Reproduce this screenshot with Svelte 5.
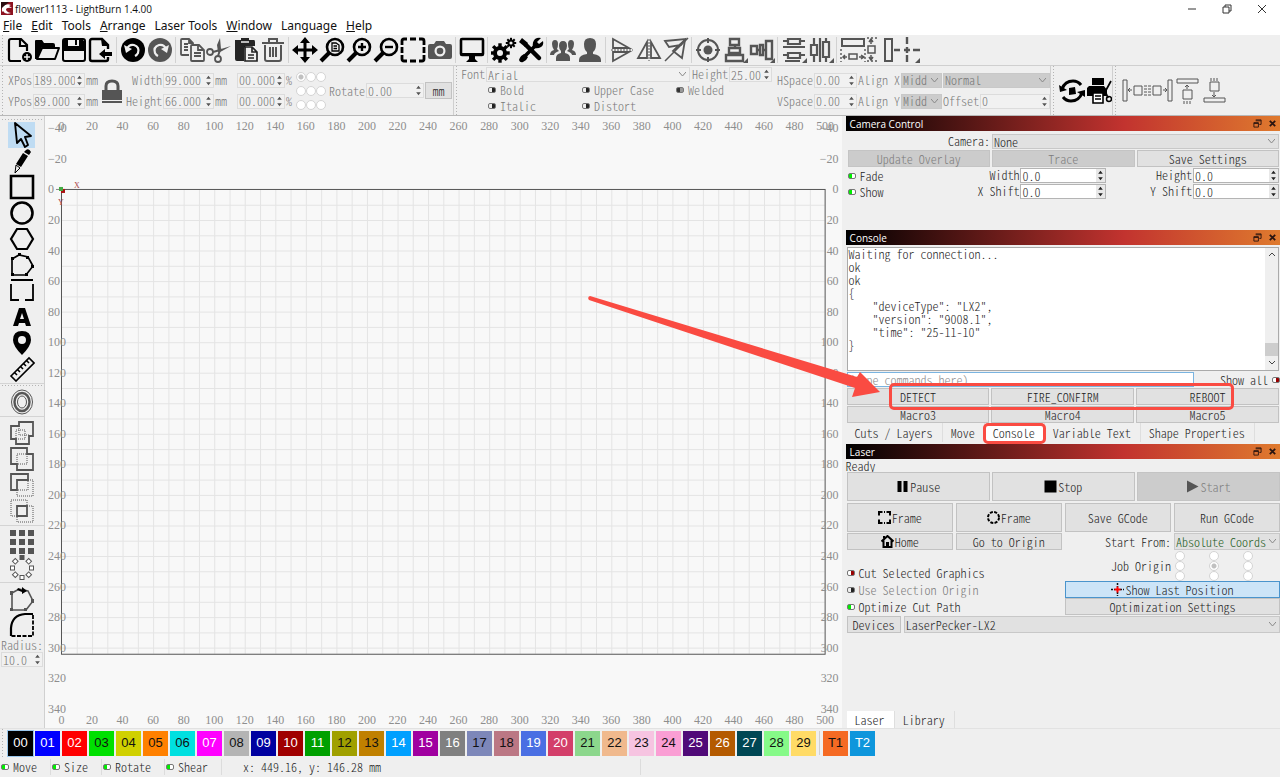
<script>
  const line = (d, w = 2, extra = '') =>
    `<path d="${d}" fill="none" stroke="currentColor" stroke-width="${w}" ${extra}/>`;
  const fill = (d, extra = '') => `<path d="${d}" fill="currentColor" ${extra}/>`;
  const gear = (cx, cy, r, hole, teeth, w) => {
    let s = `<circle cx="${cx}" cy="${cy}" r="${(r + hole) / 2}" fill="none" stroke="currentColor" stroke-width="${r - hole}"/>`;
    for (let i = 0; i < teeth; i++) {
      s += `<rect x="${cx - w / 2}" y="${cy - r - w * 0.8}" width="${w}" height="${w * 1.2}" fill="currentColor" transform="rotate(${(i * 360) / teeth} ${cx} ${cy})"/>`;
    }
    return s;
  };
  const lens = (inner) =>
    `<circle cx="16" cy="10" r="8" fill="none" stroke="currentColor" stroke-width="2.6"/>` +
    line('M10 16L2 24', 4) + inner;
  const squares = () => {
    let s = '';
    for (let y = 0; y < 3; y++) for (let x = 0; x < 3; x++)
      s += `<rect x="${1 + x * 9}" y="${1 + y * 9}" width="6" height="6" fill="currentColor"/>`;
    return s;
  };
  const ring = () => {
    let s = '<rect x="10.500" y="0" width="5" height="5" fill="currentColor"/>';
    for (let i = 1; i < 8; i++)
      s += `<rect x="11" y="1.500" width="4" height="4" fill="#fff" stroke="currentColor" transform="rotate(${i * 45} 13 13)"/>`;
    return s;
  };

  const icons = {
    newfile: line('M14 24H4Q2 24 2 22V4Q2 2 4 2H14L20 8V14M13 2V9H20', 2.2) +
      `<circle cx="20" cy="20" r="5" fill="currentColor"/><path d="M20 17V23M17 20H23" stroke="#efefef" stroke-width="1.500"/>`,
    open: fill('M1 22V4Q1 3 2 3H8L10 6H19Q21 6 21 8V10H8L3 22Z') + line('M3 22L8 11H25L21 22Z', 2, 'stroke-linejoin="round"'),
    save: `<rect x="2" y="2" width="22" height="22" rx="2" fill="none" stroke="currentColor" stroke-width="2"/>` +
      fill('M2 2H7V9H18V2H21L24 5V13H2Z') + fill('M14 3H16V8H14Z') + line('M3 13H23', 2),
    exportfile: line('M20 12V8L14 2H4Q2 2 2 4V22Q2 24 4 24H18Q20 24 20 22V20', 2.4) + fill('M13 2L21 9H14Z') +
      fill('M11 17L17 12V15H24V19H17V22Z'),
    undo: `<circle cx="13" cy="13" r="12" fill="currentColor"/><path d="M7 12Q9 7 14 8Q20 10 18 16Q17 18 15 19" fill="none" stroke="#efefef" stroke-width="2.200"/><path d="M4 8L6 16L12 12Z" fill="#efefef"/>`,
    redo: `<circle cx="13" cy="13" r="12" fill="currentColor"/><path d="M19 12Q17 7 12 8Q6 10 8 16Q9 18 11 19" fill="none" stroke="#efefef" stroke-width="2.200"/><path d="M22 8L20 16L14 12Z" fill="#efefef"/>`,
    copy: line('M10 18H3Q2 18 2 17V3Q2 2 3 2H10L14 6V7M10 2V6H13M5 7H9M5 10H9M5 13H9', 1.8) +
      line('M13 8H20L25 13V23Q25 24 24 24H13Q12 24 12 23V9Q12 8 13 8ZM19 9V13H24M15 16H22M15 19H22', 1.8),
    cut: `<circle cx="4" cy="15" r="3" fill="none" stroke="currentColor" stroke-width="1.800"/><circle cx="12" cy="22" r="3" fill="none" stroke="currentColor" stroke-width="1.800"/>` +
      line('M7 15L14 13L12 19') + fill('M12 15L11 8L14 1L15 12L25 9L16 14L14 15Z'),
    paste: fill('M2 3H8V1H16V3H21Q22 3 22 5V9H14Q11 9 11 12V24H4Q2 24 2 22Z', 'opacity="0.85"') +
      `<path d="M8 5H16" stroke="#efefef" stroke-width="1.500"/>` + line('M12 10H19L24 15V24H12ZM19 10V15H24M15 18H21M15 21H21', 1.7, 'opacity="0.85"'),
    trash: line('M2 6H24M9 5V2H17V5M5 8V22Q5 24 7 24H19Q21 24 21 22V8M10 10V20M13 10V20M16 10V20', 2),
    move: line('M13 3V23M3 13H23', 3) + fill('M13 0L18 6H8ZM13 26L18 20H8ZM0 13L6 8V18ZM26 13L20 8V18Z'),
    zoompage: lens(line('M13 6H17L20 8V14H13ZM14.500 9H18M14.500 11.500H18', 1.3)),
    zoomin: lens(line('M12 10H20M16 6V14', 2.4)),
    zoomout: lens(line('M12 10H20', 2.4)),
    frame: line('M2 8V4Q2 2 4 2H7M10 2H16M19 2H22Q24 2 24 4V8M24 10V16M24 18V22Q24 24 22 24H19M16 24H10M7 24H4Q2 24 2 22V18M2 16V10', 2.8),
    camera: `<path fill-rule="evenodd" fill="currentColor" d="M3 7H7L9 4H17L19 7H23Q25 7 25 9V20Q25 22 23 22H3Q1 22 1 20V9Q1 7 3 7ZM13 8.500A5.500 5.500 0 1 0 13 19.500A5.500 5.500 0 1 0 13 8.500Z"/><circle cx="13" cy="14" r="3.300" fill="currentColor"/>`,
    monitor: `<rect x="2" y="2" width="22" height="16" rx="1" fill="none" stroke="currentColor" stroke-width="2.600"/>` + fill('M2 16H24V19H2ZM10 19H16V22L19 25H7L10 22Z'),
    gears: gear(9, 16, 7, 3, 8, 3.4) + gear(20, 6, 3.6, 1.6, 8, 2),
    tools: line('M21 21L8 8', 4.5, 'stroke-linecap="round"') + line('M4 22L17 9', 3.6, 'stroke-linecap="round"') +
      fill('M1 5L4 1L10 6L7 10Z') + fill('M15 10Q14 5 17 2Q20 0 23 1L19 5L21 7L25 4Q26 8 23 10Q20 12 16 11Z') + fill('M1 23Q2 19 6 17L10 20Q9 23 5 25Q2 26 1 23Z'),
    group: fill('M13 4Q17 4 17 9Q17 12 15 14V16Q20 17 20 21V24H6V21Q6 17 11 16V14Q9 12 9 9Q9 4 13 4Z') +
      fill('M5 3Q8 3 8 7Q8 10 7 12L9 14Q4 16 4 18H0Q0 14 4 13Q2 10 2 7Q2 3 5 3ZM21 3Q24 3 24 7Q24 10 22 13Q26 14 26 18H22Q22 16 17 14L19 12Q18 10 18 7Q18 3 21 3Z'),
    person: fill('M13 1Q19 1 19 7Q19 13 16 15V17Q24 18 24 23V25H2V23Q2 18 10 17V15Q7 13 7 7Q7 1 13 1Z'),
    flipv: line('M4 2V11L20 11ZM4 24V15L20 15Z', 1.8) + line('M2 13H24', 1, 'stroke-dasharray="2 1"'),
    fliph: line('M2 21H11V5ZM24 21H15V5Z', 1.8) + line('M13 2V24', 1, 'stroke-dasharray="2 1"'),
    mirror: line('M2 4L22 2L18 8L6 10ZM22 3L10 14L19 21Z', 1.8) + line('M2 24L25 1M12 12L22 3', 1.5),
    target: `<circle cx="13" cy="13" r="10" fill="none" stroke="currentColor" stroke-width="2"/><circle cx="13" cy="13" r="4.500" fill="currentColor"/>` + line('M13 1V6M13 20V25M1 13H6M20 13H25', 2),
    alignv: line('M8 2H17V8H8ZM4 18H21V24H4ZM7 11H18V16H7ZM13 8V11M13 16V18', 2.4) + fill('M26 21V26H21Z'),
    alignh: line('M2 9H8V17H2ZM17 4H23V22H17ZM11 8H14V18H11ZM8 13H11M14 13H17', 2.4) + fill('M26 21V26H21Z'),
    distv: line('M7 2H19V7H7ZM7 16H19V21H7ZM2 4H7M19 4H24M2 10H24M2 18H7M19 18H24M4 24H19', 2.2) + fill('M26 21V26H21Z'),
    disth: line('M3 8H9V18H3ZM15 5H21V20H15ZM6 1V8M6 18V25M12 1V25M18 1V5M18 20V25', 2.2) + fill('M26 21V26H21Z'),
    movea: line('M2 2H24V9H2Z', 2) + line('M9 17H17V22H9ZM3 20H7M19 20H24M5 18L3 20L5 22M21 18L24 20L21 22', 1.5) + line('M1 12V25M25 12V25', 1.4, 'stroke-dasharray="2 2"'),
    moveb: line('M1 9H8V16H1ZM4 3V7M4 18V23M2 5L4 2L6 5M2 20L4 23L6 20', 1.5) + line('M18 2H25V24H18Z', 2) + line('M0 1H12M0 24H12', 1.4, 'stroke-dasharray="2 2"'),
    movec: line('M13 0V7M13 18V25M0 13H6M19 13H26M13 10V16M10 13H16', 2.4) + fill('M26 21V26H21Z'),

    cursor: line('M6 1L8 21L12 17L16 25L19 23L16 15L22 14Z', 1.9, 'stroke-linejoin="round"'),
    pencil: fill('M17 2Q20 0 22 4L20 7L15 4ZM14 5L19 8L12 19L7 16Z') + line('M7 17L11 20L6 25Z', 1),
    square: line('M2 2H24V24H2Z', 2.6),
    circle: `<circle cx="13" cy="13" r="10.500" fill="none" stroke="currentColor" stroke-width="2.600"/>`,
    hexagon: line('M8 3H18L24 13L18 23H8L2 13Z', 2.2),
    polygon: line('M3 7L10 3L19 5L24 14L17 23H3Z', 1.7) + fill('M2 5H5V8H2ZM9 1H12V4H9ZM17 4H20V7H17ZM22 13H25V16H22ZM16 21H19V24H16ZM2 21H5V24H2Z'),
    bracket: line('M2 2H24M2 6V22H10M16 22H24V6', 1.8),
    letter: fill('M10 4H16L22 22H17L16 19H10L9 22H4ZM13 9L11 15H15Z', 'fill-rule="evenodd"'),
    pin: fill('M13 1Q22 1 22 10Q22 16 13 25Q4 16 4 10Q4 1 13 1ZM13 6A4 4 0 1 0 13 14A4 4 0 1 0 13 6Z', 'fill-rule="evenodd"'),
    ruler: line('M2 20L20 2L25 7L7 25ZM6 17L8 19M9 14L11 16M12 11L14 13M15 8L17 10M18 5L20 7', 1.6),
    offset: `<ellipse cx="13" cy="13" rx="10.500" ry="12" fill="none" stroke="currentColor"/><ellipse cx="13" cy="13" rx="7.500" ry="9" fill="none" stroke="currentColor" stroke-width="2.400"/><ellipse cx="13" cy="13" rx="4.500" ry="6" fill="none" stroke="currentColor"/>`,
    union: line('M10 2H24V16H20V24H7V19H2V6H10Z', 1.8) + line('M7 10H16V19H7ZM10 6V15H20', 1, 'stroke-dasharray="1 1"'),
    subtract: line('M2 2H18V8H24V24H8V18H2Z', 1.8) + line('M8 8H18V18H8Z', 1, 'stroke-dasharray="1 1"'),
    diff: line('M2 2H19V8H8V18H2Z', 1.8) + line('M19 8H24V24H8V18H19Z', 1, 'stroke-dasharray="1 1"'),
    intersect: line('M8 8H18V18H8Z', 1.8) + line('M8 18H2V2H18V8M18 8H24V24H8V18', 1, 'stroke-dasharray="1 1"'),
    array: squares(),
    circular: ring(),
    path: line('M3 7L10 3L19 5L24 15L17 24H3Z', 1.6) + fill('M1 5H4V9H1ZM22 13H25V17H22ZM15 22H18V25H15ZM1 22H4V25H1Z') + `<path d="M9 2L13 4L13 1L18 5L13 8V6L8 4Z" fill="#000"/>`,
    radius: line('M2 24V16Q3 3 16 2H24', 2.2) + line('M24 3V24H2', 1.8, 'stroke-dasharray="4 1.500"'),

    lock: fill('M3 12H23V22H3ZM3 23H23V25H3Z') + line('M7 13V8Q7 3 13 3Q19 3 19 8V13', 3),
    cycle: line('M3 11Q6 3 14 3Q19 3 22 7M23 15Q20 23 12 23Q7 23 4 19', 3) + fill('M0 7L8 12L1 14ZM26 19L18 14L26 12ZM10 10L16 9L17 16L10 17Z'),
    printcut: fill('M6 0H18V7H6ZM3 8H18L21 12V18H1V10Z') + `<path d="M7 15H17V25H7Z" fill="#fff" stroke="currentColor" stroke-width="1.600"/>` +
      line('M9 18H15M9 21H15M19 14L25 3M18 10L22 20', 1.7) + `<circle cx="23" cy="21" r="2.500" fill="none" stroke="currentColor" stroke-width="1.500"/>`,
    dockl: line('M2 2H6V23H2ZM13 8H21V17H13ZM7 12H11M9 10L7 12L9 14M23 8H26M23 11H26M23 14H26M23 17H26', 1),
    dockr: line('M20 2H24V23H20ZM5 8H13V17H5ZM15 12H19M17 10L19 12L17 14M0 8H3M0 11H3M0 14H3M0 17H3', 1),
    dockt: line('M2 1H23V5H2ZM8 12H17V21H8ZM12 11V7M10 9L12 7L14 9M9 23V26M12 23V26M15 23V26', 1),
    dockb: line('M2 20H23V24H2ZM8 4H17V13H8ZM12 14V19M10 17L12 19L14 17M9 0V3M12 0V3M15 0V3', 1),

    pause: fill('M3 2H11V24H3ZM15 2H23V24H15Z'),
    stop: fill('M1 1H25V25H1Z'),
    play: fill('M2 1L25 13L2 25Z'),
    framebold: line('M2 9V2H9M17 2H24V9M24 17V24H17M9 24H2V17M12 2H14M12 24H14', 4),
    ringdash: `<circle cx="13" cy="13" r="11" fill="none" stroke="currentColor" stroke-width="4" stroke-dasharray="6 2.640"/>`,
    home: line('M1 13L13 2L25 13M5 11V24H21V11', 4) + fill('M10 24V14H16V24ZM4 2H8V7H4Z'),
    cross: `<path d="M13 0V8M13 18V26M0 13H8M18 13H26" stroke="#111" stroke-width="3" stroke-dasharray="4 2"/><path d="M13 7V19M7 13H19" stroke="#f00" stroke-width="4"/>`
  };

  const bar = [
    [['newfile', 1], ['open', 1], ['save', 1], ['exportfile', 1]],
    [['undo', 1], ['redo', 0]],
    [['copy', 0], ['cut', 0], ['paste', 1], ['trash', 0]],
    [['move', 1], ['zoompage', 1], ['zoomin', 1], ['zoomout', 1], ['frame', 1], ['camera', 0]],
    [['monitor', 1]],
    [['gears', 1], ['tools', 1]],
    [['group', 0], ['person', 0]],
    [['flipv', 0], ['fliph', 0], ['mirror', 0]],
    [['target', 0], ['alignv', 0], ['alignh', 0]],
    [['distv', 0], ['disth', 0]],
    [['movea', 0], ['moveb', 0], ['movec', 0]]
  ];
  const side = [
    [['cursor', 1], ['pencil', 1], ['square', 1], ['circle', 1], ['hexagon', 1], ['polygon', 1], ['bracket', 1], ['letter', 1], ['pin', 1], ['ruler', 1]],
    [['offset', 0]],
    [['union', 0], ['subtract', 0], ['diff', 0], ['intersect', 0]],
    [['array', 0], ['circular', 0]],
    [['path', 0], ['radius', 1]]
  ];
  const menus = [['F', 'ile'], ['E', 'dit'], ['', 'Tools'], ['A', 'rrange'], ['', 'Laser Tools'], ['W', 'indow'], ['', 'Language'], ['H', 'elp']];
  const colors = ['#000000', '#0000ff', '#ff0000', '#00e000', '#d0d000', '#ff8000', '#00e0e0', '#ff00ff', '#b4b4b4', '#0000a0', '#a00000', '#00a000', '#a0a000', '#c08000', '#00a0ff', '#a000a0', '#808080', '#7d87b9', '#bb7784', '#4a6fe3', '#d33f6a', '#8cd78c', '#f0b98d', '#f6c4e1', '#fa9ed4', '#500a78', '#b45a00', '#004754', '#86fa88', '#ffdb66'];
  const lightText = [0, 1, 2, 7, 9, 10, 11, 14, 15, 16, 19, 20, 25, 26, 27];
  const xs = Array.from({ length: 26 }, (_, i) => i * 20);
  const ys = Array.from({ length: 20 }, (_, i) => i * 20 - 40);
  const step = 1.528;
  const gx = Array.from({ length: 50 }, (_, i) => 17 + (i + 1) * 10 * step).filter((v) => v < 780);
  const gy = Array.from({ length: 30 }, (_, i) => 74 + (i + 1) * 10 * step);
  const log = `Waiting for connection...
ok
ok
{
    "deviceType": "LX2",
    "version": "9008.1",
    "time": "25-11-10"
}`;
</script>

{#snippet icon(name)}
  <svg class="ico" viewBox="0 0 26 26" aria-hidden="true">{@html icons[name]}</svg>
{/snippet}

{#snippet spin(id, label, value, unit = '', off = true)}
  <label for={id} class="lab" class:off>{label}</label>
  <span class="spin" class:off>
    <input {id} type="text" {value} disabled={off} />
    <svg viewBox="0 0 9 14" aria-hidden="true"><path d="M2 5L4.500 2L7 5ZM2 9L4.500 12L7 9Z" /></svg>
  </span>
  {#if unit}<span class="unit">{unit}</span>{/if}
{/snippet}

{#snippet toggle(label, kind, off = false)}
  <label class="toggle" class:off><input type="checkbox" class={kind} checked={kind === 'on'} disabled={off} />{label}</label>
{/snippet}

{#snippet radios(name, chosen)}
  <div class="radios">
    {#each Array(9) as _, i}
      <input type="radio" {name} aria-label="{name} {i + 1}" checked={i === chosen} />
    {/each}
  </div>
{/snippet}

{#snippet head(title)}
  <header class="head">
    <h2>{title}</h2>
    <button aria-label="Float"><svg viewBox="0 0 10 10"><path d="M3 1H9V6H7M1 4H6V9H1ZM1 5H6M3 2H9" /></svg></button>
    <button aria-label="Close"><svg viewBox="0 0 10 10"><path d="M2 2L8 8M8 2L2 8" stroke-width="2" /></svg></button>
  </header>
{/snippet}

<div class="app">
  <div class="title">
    <svg class="logo" viewBox="0 0 12 13" aria-hidden="true">
      <rect width="12" height="13" fill="#8d1220" /><path d="M0 0H8L0 7Z" fill="#2a0d10" />
      <path d="M2 5Q5 1 10 3L8 4L11 6Q7 5 5 7Q5 10 10 11Q4 13 2 9L1 10V6Z" fill="#fff" />
    </svg>
    <h1>flower1113 - LightBurn 1.4.00</h1>
    <div class="win">
      <button aria-label="Minimize"><svg viewBox="0 0 10 10"><path d="M1 5H9" /></svg></button>
      <button aria-label="Restore"><svg viewBox="0 0 10 10"><path d="M1 3H7V9H1ZM3 3V1H9V7H7" /></svg></button>
      <button aria-label="Close window"><svg viewBox="0 0 10 10"><path d="M1 1L9 9M9 1L1 9" /></svg></button>
    </div>
  </div>
  <nav class="menu">
    {#each menus as [u, rest]}<button><u>{u}</u>{rest}</button>{/each}
  </nav>

  <div class="bar grip">
    {#each bar as group}
      <div class="set">
        {#each group as [name, on]}<button class="tool" class:dim={!on} aria-label={name}>{@render icon(name)}</button>{/each}
      </div>
    {/each}
  </div>

  <div class="props grip">
    <div class="pos">
      {@render spin('xpos', 'XPos', '189.000', 'mm')}
      {@render spin('ypos', 'YPos', '89.000', 'mm')}
    </div>
    <button class="lock dim" aria-label="Lock aspect">{@render icon('lock')}</button>
    <div class="size">
      {@render spin('w', 'Width', '99.000', 'mm')}
      {@render spin('wp', '', '00.000', '%')}
      {@render spin('h', 'Height', '66.000', 'mm')}
      {@render spin('hp', '', '00.000', '%')}
    </div>
    {@render radios('Anchor', 0)}
    <div class="rotate">
      {@render spin('rot', 'Rotate', '0.00')}
      <button class="btn">mm</button>
    </div>
    <div class="font grip">
      <div class="fontrow">
        <label class="lab off" for="font">Font</label>
        <select id="font" class="sel face" disabled><option>Arial</option></select>
        {@render spin('fh', 'Height', '25.00')}
      </div>
      <div class="styles">
        {@render toggle('Bold', 'black', true)}
        {@render toggle('Upper Case', 'black', true)}
        {@render toggle('Welded', 'grey', true)}
        {@render toggle('Italic', 'black', true)}
        {@render toggle('Distort', 'black', true)}
      </div>
    </div>
    <div class="space">
      {@render spin('hs', 'HSpace', '0.00')}
      <label class="lab off" for="ax">Align X</label>
      <select id="ax" class="sel" disabled><option>Midd</option></select>
      <select aria-label="Mode" class="sel wide" disabled><option>Normal</option></select>
      {@render spin('vs', 'VSpace', '0.00')}
      <label class="lab off" for="ay">Align Y</label>
      <select id="ay" class="sel" disabled><option>Midd</option></select>
      {@render spin('of', 'Offset', '0')}
    </div>
    <div class="icons grip">
      <button class="tool" aria-label="Refresh">{@render icon('cycle')}</button>
      <button class="tool" aria-label="Print and cut">{@render icon('printcut')}</button>
    </div>
    <div class="icons grip dim">
      {#each ['dockl', 'dockr', 'dockt', 'dockb'] as name}
        <button class="tool" aria-label={name}>{@render icon(name)}</button>
      {/each}
    </div>
  </div>

  <main>
    <aside class="side">
      {#each side as group, g}
        <div class="stack" class:gripped={g < 2}>
          {#each group as [name, on], i}
            <button class="tool" class:dim={!on} class:active={g === 0 && i === 0} aria-label={name}>{@render icon(name)}</button>
          {/each}
        </div>
      {/each}
      <div class="rad">{@render spin('radius', 'Radius:', '10.0')}</div>
    </aside>

    <svg class="canvas" viewBox="0 0 797 612" preserveAspectRatio="xMinYMin meet">
      <path class="grid" d={gx.map((x) => `M${x} 74V538`).join('') + gy.map((y) => `M17 ${y}H780`).join('')} />
      <rect class="bed" x="16.5" y="73.5" width="764" height="465" />
      {#each xs as v}
        <text x={16.5 + v * step} y="14" text-anchor="middle">{v}</text>
        <text x={16.5 + v * step} y="608" text-anchor="middle">{v}</text>
      {/each}
      {#each ys as v}
        <text x="3" y={77.5 + v * step}>{String(v).replace('-', '−')}</text>
        <text x="794" y={77.5 + v * step} text-anchor="end">{String(v).replace('-', '−')}</text>
      {/each}
      <path d="M11 73.500H17" stroke="#888" />
      <text class="axis" x="29" y="72">X</text>
      <text class="axis" x="13" y="89">Y</text>
      <rect x="16" y="73" width="4" height="4" fill="#a11" /><rect x="14" y="71" width="4" height="4" fill="#4a4" />
    </svg>

    <div class="dock">
      <section class="camera">
        {@render head('Camera Control')}
        <div class="three">
          <label class="lab" for="cam">Camera:</label>
          <select id="cam" class="sel two"><option>None</option></select>
          <button class="btn" disabled>Update Overlay</button>
          <button class="btn" disabled>Trace</button>
          <button class="btn">Save Settings</button>
        </div>
        <div class="shift">
          <div>{@render toggle('Fade', 'on')}{@render spin('cw', 'Width', '0.0', '', false)}</div>
          <div>{@render spin('ch', 'Height', '0.0', '', false)}</div>
          <div>{@render toggle('Show', 'on')}{@render spin('cx', 'X Shift', '0.0', '', false)}</div>
          <div>{@render spin('cy', 'Y Shift', '0.0', '', false)}</div>
        </div>
      </section>

      <section class="console">
        {@render head('Console')}
        <div class="logbox">
          <pre>{log}</pre>
          <div class="scroll">
            <svg viewBox="0 0 8 8"><path d="M1 5L4 2L7 5" /></svg>
            <span></span>
            <svg viewBox="0 0 8 8"><path d="M1 2L4 5L7 2" /></svg>
          </div>
        </div>
        <div class="cmd">
          <input type="text" aria-label="Command" placeholder="(type commands here)" />
          <label>Show all<input type="checkbox" class="red" /></label>
        </div>
        <div class="macros">
          <button class="btn">DETECT</button><button class="btn">FIRE_CONFIRM</button><button class="btn">REBOOT</button>
          <button class="btn">Macro3</button><button class="btn">Macro4</button><button class="btn">Macro5</button>
          <span class="mark"></span>
        </div>
        <div class="tabs">
          <button>Cuts / Layers</button><button>Move</button><button class="cur">Console<span class="mark"></span></button><button>Variable Text</button><button>Shape Properties</button>
        </div>
      </section>

      <section class="laser">
        {@render head('Laser')}
        <p>Ready</p>
        <div class="run">
          <button class="btn">{@render icon('pause')}Pause</button>
          <button class="btn">{@render icon('stop')}Stop</button>
          <button class="btn" disabled>{@render icon('play')}Start</button>
        </div>
        <div class="four">
          <button class="btn tall">{@render icon('framebold')}Frame</button>
          <button class="btn tall">{@render icon('ringdash')}Frame</button>
          <button class="btn tall">Save GCode</button>
          <button class="btn tall">Run GCode</button>
          <button class="btn">{@render icon('home')}Home</button>
          <button class="btn">Go to Origin</button>
          <label class="lab" for="from">Start From:</label>
          <select id="from" class="sel green"><option>Absolute Coords</option></select>
          <div class="opts">
            {@render toggle('Cut Selected Graphics', 'red')}
            {@render toggle('Use Selection Origin', 'black', true)}
            {@render toggle('Optimize Cut Path', 'on')}
          </div>
          <div class="job">
            <span class="lab">Job Origin</span>
            {@render radios('Origin', 4)}
            <button class="btn lit">{@render icon('cross')}Show Last Position</button>
            <button class="btn">Optimization Settings</button>
          </div>
        </div>
        <div class="dev">
          <button class="btn">Devices</button>
          <select aria-label="Device" class="sel"><option>LaserPecker-LX2</option></select>
        </div>
      </section>
      <div class="tabs foot"><button class="cur">Laser</button><button>Library</button></div>
    </div>

    <svg class="arrow" viewBox="0 0 294 106" aria-hidden="true">
      <path d="M2 1L269 82L272 77L292 97L264 102L267 93L1 5Q-1 2 2 1Z" fill="#fa4b42" />
    </svg>
  </main>

  <div class="palette grip">
    {#each colors as c, i}
      <button class="sw" class:pick={i === 0} style="background:{c};color:{lightText.includes(i) ? '#fff' : '#111'}">{String(i).padStart(2, '0')}</button>
    {/each}
    <i></i>
    <button class="sw" style="background:#f56a23;color:#111">T1</button>
    <button class="sw" style="background:#0e96dc;color:#fff">T2</button>
  </div>
  <footer>
    {@render toggle('Move', 'on')}
    {@render toggle('Size', 'on')}
    {@render toggle('Rotate', 'on')}
    {@render toggle('Shear', 'on')}
    <output>x: 449.16, y: 146.28 mm</output>
    <span class="rest"></span>
  </footer>
</div>

<style>
  :global(body) { margin: 0; }
  * { box-sizing: border-box; }
  .app {
    display: flex; flex-direction: column; min-height: 100vh; background: #efefef; color: #1c1c1c;
    font-family: "Noto Sans CJK SC", "Liberation Mono", monospace; font-feature-settings: "hwid", "liga" 0; font-weight: 300; font-size: 12px; line-height: 14px;
  }
  button, input, select { font: inherit; font-feature-settings: inherit; color: inherit; margin: 0; padding: 0; border: 0; background: none; min-width: 0; }
  h1, h2, p, pre { margin: 0; font: inherit; font-feature-settings: inherit; }
  .grip { background: repeating-linear-gradient(#b4b4b4 0 1px, transparent 1px 3px) 2px 0 / 1px 100% no-repeat; }
  .title, .menu { background: #fff; font-feature-settings: normal; font-weight: 400; color: #111; }
  .title { display: flex; align-items: center; height: 17px; padding-left: 1px; font-family: "Open Sans", sans-serif; font-size: 10px; }
  .logo { width: 12px; height: 13px; margin-right: 2px; }
  .win { margin-left: auto; display: flex; gap: 25px; padding-right: 13px; }
  .win svg { display: block; width: 10px; height: 10px; fill: none; stroke: #333; }
  .menu { display: flex; gap: 9px; height: 18px; padding-left: 3px; font-family: "Noto Sans", sans-serif; font-size: 12px; line-height: 18px; }
  .bar { display: flex; height: 31px; align-items: center; padding-left: 6px; border-bottom: 1px solid #cfcfcf; }
  .set { display: flex; }
  .set + .set { border-left: 1px solid #d2d2d2; margin-left: 2px; padding-left: 2px; }
  .tool { width: 27px; height: 26px; display: grid; place-items: center; color: #000; }
  .ico { display: block; width: 26px; height: 26px; }
  .dim, .dim .tool { color: #555; }
  .props { display: flex; height: 50px; align-items: center; padding-left: 8px; border-bottom: 1px solid #b8b8b8; }
  .lab { white-space: nowrap; text-align: right; }
  .lab.off, .unit { color: #7a7a7a; }
  .spin { display: flex; align-items: center; height: 15px; border: 1px solid #b4b4b4; background: #fff; min-width: 0; overflow: hidden; }
  .spin input { width: 100%; flex: 1; padding-left: 1px; height: 13px; }
  .spin svg { width: 9px; height: 13px; background: #e8e8e8; fill: #222; flex: none; }
  .spin.off { border-color: #dcdcdc; background: #f1f1f1; color: #757575; }
  .spin.off svg { fill: #555; background: none; }
  .pos { display: grid; grid-template-columns: 24px 52px 12px; column-gap: 1px; row-gap: 6px; }
  .pos .spin input { padding: 0; }
  .lock { width: 26px; margin: 0 0 0 1px; }
  .size { display: grid; grid-template-columns: 37px 51px 20px 0 48px 7px; column-gap: 1px; row-gap: 6px; }
  .radios { display: grid; grid-template-columns: repeat(3, 1fr); justify-items: center; }
  input[type="radio"] { appearance: none; width: 10px; height: 10px; border: 1px solid #d4d4d4; border-radius: 50%; background: #fff; }
  input[type="radio"]:checked { background: radial-gradient(circle, #c0c0c0 0 2px, #fff 3px); }
  .props .radios { width: 30px; row-gap: 4px; margin: 0 2px 0 3px; }
  .rotate { display: grid; grid-template-columns: 37px 58px 27px; column-gap: 1px; align-items: center; }
  .btn { display: flex; align-items: center; justify-content: center; gap: 1px; height: 17px; border: 1px solid #c2c2c2; background: #e1e1e1; white-space: nowrap; }
  .btn:disabled { background: #ccc; color: #7c7c7c; border-color: #c4c4c4; }
  .btn .ico { width: 13px; height: 13px; color: #000; }
  .btn:disabled .ico { color: #555; }
  .font { border-left: 1px solid #cfcfcf; margin-left: 1px; padding-left: 6px; height: 49px; padding-top: 1px; }
  .fontrow { display: grid; grid-template-columns: 25px 204px 37px 43px; column-gap: 1px; }
  .sel {
    appearance: none; height: 15px; padding: 0 12px 0 1px; border: 1px solid #c8c8c8; border-radius: 0; opacity: 1; line-height: 12px;
    background: #e1e1e1 url("data:image/svg+xml,%3Csvg xmlns='http://www.w3.org/2000/svg' width='7' height='5'%3E%3Cpath d='M0 0L3.500 4L7 0' fill='none' stroke='%23888'/%3E%3C/svg%3E") no-repeat right 3px center;
  }
  .sel:disabled { background-color: #ccc; color: #757575; }
  .sel.face { background-color: #f1f1f1; border-color: #dcdcdc; }
  .toggle { display: flex; align-items: center; gap: 4px; white-space: nowrap; }
  .toggle.off { color: #7a7a7a; }
  input[type="checkbox"] { appearance: none; flex: none; width: 8px; height: 6px; border: 1px solid #777; border-radius: 2px; }
  .on { background: linear-gradient(90deg, #0e0 3px, #fff 3px); }
  .red { background: linear-gradient(90deg, #fff 3px, #900 3px); }
  .black { background: linear-gradient(90deg, #eee 3px, #222 3px); }
  .grey { background: linear-gradient(90deg, #333 3px, #999 3px); }
  .styles { display: grid; grid-template-columns: 94px 94px 1fr; row-gap: 2px; padding: 1px 0 0 28px; }
  .space { display: grid; grid-template-columns: 36px 43px 42px 41px 36px 70px; column-gap: 1px; row-gap: 6px; margin-left: 5px; }
  .space .wide { grid-column: span 2; }
  .icons { display: flex; align-items: center; height: 49px; border-left: 1px solid #cfcfcf; padding-left: 7px; }
  main { position: relative; flex: 1; display: flex; }
  .side { width: 45px; flex: none; border-right: 1px solid #d0d0d0; padding-top: 2px; }
  .stack { padding: 4px 0 0 8px; }
  .stack + .stack { border-top: 1px solid #d4d4d4; margin-top: 1px; padding-top: 3px; }
  .gripped { background: repeating-linear-gradient(90deg, #b4b4b4 0 1px, transparent 1px 3px) 2px 1px / 40px 1px no-repeat; }
  .stack + .gripped { padding-top: 5px; }
  .active { background: #bfdcf3; }
  .rad { display: grid; padding: 0 2px 0 1px; }
  .rad .lab { text-align: left; }
  .canvas { flex: 1; min-width: 0; contain: size; background: #f8f8f8; font-family: "Liberation Serif", serif; font-feature-settings: normal; font-weight: 400; fill: #8e8e8e; }
  .grid { stroke: #e4e4e4; fill: none; }
  .bed { fill: none; stroke: #555; }
  .axis { fill: #a44; font-size: 8px; }
  .dock { width: 34.25%; flex: none; display: flex; flex-direction: column; padding-left: 4px; }
  .head { display: flex; align-items: center; gap: 6px; height: 15px; padding: 0 3px 0 4px; background: linear-gradient(90deg, #000, #c2332f 64%, #df7a2e); color: #fff; font-family: "Open Sans", sans-serif; font-feature-settings: normal; font-weight: 400; font-size: 10px; }
  .head h2 { flex: 1; }
  .head svg { display: block; width: 9px; height: 9px; fill: none; stroke: #2a1510; }
  .camera { height: 114px; }
  .three { display: grid; grid-template-columns: repeat(3, 1fr); gap: 1px 2px; padding: 3px 1px 1px 2px; }
  .two { grid-column: span 2; }
  .shift { display: grid; grid-template-columns: 3fr 2fr; row-gap: 1px; padding: 0 1px 0 2px; }
  .shift > div { display: flex; justify-content: flex-end; gap: 1px; }
  .shift > div:nth-child(odd) .toggle { flex: 1; }
  .shift .spin { width: 86px; }
  .logbox { display: flex; margin: 2px 1px 0; height: 124px; border: 1px solid #aaa; background: #fff; }
  .logbox pre { flex: 1; padding: 0 1px; margin-top: -1px; line-height: 13px; font-family: inherit; }
  .scroll { width: 13px; background: #efefef; display: flex; flex-direction: column; align-items: center; padding: 3px 0; }
  .scroll svg { width: 8px; height: 8px; fill: none; stroke: #444; }
  .scroll span { width: 13px; height: 13px; background: #cdcdcd; margin: auto 0 3px; }
  .cmd { display: flex; margin: 1px 0 0 1px; height: 15px; }
  .cmd input[type="text"] { flex: 4; border: 1px solid #7ab4e0; background: #fff; padding-left: 1px; }
  .cmd ::placeholder { color: #8c8c8c; opacity: 1; }
  .cmd label { flex: 1; display: flex; align-items: center; justify-content: flex-end; gap: 4px; white-space: nowrap; }
  .macros { position: relative; display: grid; grid-template-columns: repeat(3, 1fr); gap: 1px 2px; padding: 1px 1px 0; }
  .mark { position: absolute; border: 3px solid #fa4b42; border-radius: 5px; pointer-events: none; }
  .macros .mark { left: 43px; top: -4px; right: 46px; height: 27px; }
  .tabs { display: flex; height: 19px; padding-left: 1px; }
  .tabs button { padding: 0 9px 0 8px; border-right: 1px solid #dedede; position: relative; }
  .tabs .cur { background: #fff; }
  .tabs .mark { inset: 0 -2px -2px -2px; }
  .laser { padding-top: 2px; }
  .laser p { height: 13px; line-height: 13px; }
  .run { display: grid; grid-template-columns: repeat(3, 1fr); gap: 2px; padding-left: 1px; }
  .run .btn { height: 29px; }
  .four { display: grid; grid-template-columns: repeat(4, 1fr); gap: 1px 3px; padding: 2px 0 0 1px; }
  .tall { height: 29px; }
  .four > .lab { line-height: 17px; }
  .green { color: #245c24; height: 17px; padding-right: 8px; }
  .opts, .job { grid-column: span 2; }
  .opts { display: flex; flex-direction: column; gap: 3px; padding-top: 15px; }
  .job { display: grid; grid-template-columns: 1fr 1fr; column-gap: 3px; align-items: center; }
  .job .radios { grid-template-columns: repeat(3, 34px); justify-items: start; padding-left: 1px; }
  .job .btn { grid-column: span 2; }
  .lit { background: #cce4f7; border-color: #4a94cc; }
  .dev { display: flex; gap: 3px; padding: 1px 0 0 1px; }
  .dev .btn { padding: 0 5px; }
  .dev .sel { flex: 1; height: 17px; }
  .foot { margin-top: auto; height: 17px; }
  .arrow { position: absolute; left: 588px; top: 179px; width: 294px; height: 106px; pointer-events: none; }
  .palette { display: flex; gap: 2px; height: 29px; align-items: center; padding-left: 8px; border-top: 1px solid #e2e2e2; font-family: "Liberation Sans", sans-serif; font-feature-settings: normal; font-weight: 400; }
  .sw { width: 25px; height: 25px; font-size: 13px; }
  .pick { outline: 1px solid #9cc8ec; }
  .palette i { border-left: 1px solid #d0d0d0; height: 24px; margin: 0 1px; }
  footer { display: flex; height: 20px; line-height: 16px; align-items: center; }
  footer .toggle { padding: 0 13px 0 1px; border-right: 1px solid #dcdcdc; }
  output { margin-left: 21px; flex: 1; }
  .rest { width: 50%; height: 16px; border-left: 1px solid #dcdcdc; }
</style>
